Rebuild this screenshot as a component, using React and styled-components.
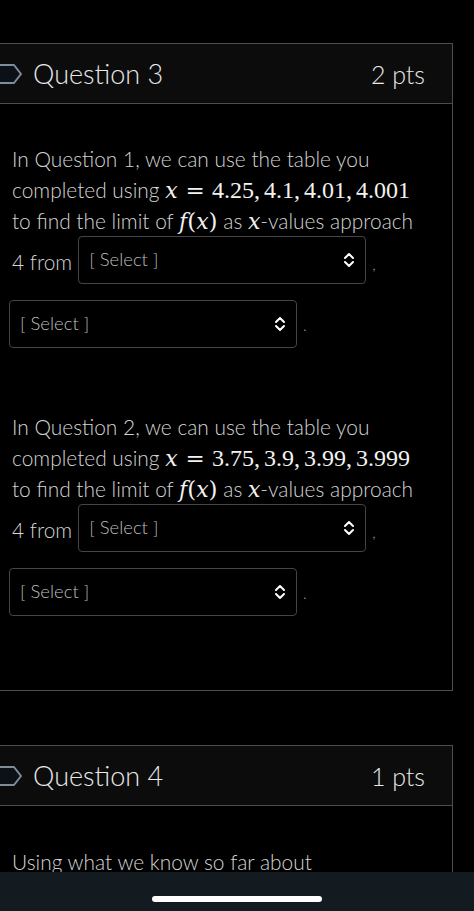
import React from "react";
import styled, { createGlobalStyle } from "styled-components";

const GlobalStyle = createGlobalStyle`
  html, body {
    margin: 0;
    padding: 0;
    background: #000;
    overflow: hidden;
  }
  body {
    font-family: Lato, "Open Sans", sans-serif;
  }
`;

const Page = styled.div`
  background: #000;
  min-height: 911px;
  padding: 43px 21px 0 0;
  display: flex;
  flex-direction: column;
  gap: 54px;
`;

const Card = styled.section`
  margin-left: -4px;
  border: 1px solid #4d4d4d;
  border-left: none;
  background: #000;
`;

const Header = styled.header`
  height: 59px;
  background: #0c0c0c;
  border-bottom: 1px solid #4d4d4d;
  display: flex;
  align-items: center;
  padding: 0 27px 0 0;
  color: #e8e8e8;
  font-size: 27px;
  font-weight: 300;
`;

const Title = styled.h2`
  flex: 1;
  margin: 0;
  font-size: inherit;
  font-weight: inherit;
  display: flex;
  align-items: center;
  gap: 11px;
`;

const Points = styled.span`
  font-size: 25px;
`;

const Body = styled.div`
  padding: ${(p) => p.$top}px 26px ${(p) => p.$bottom}px 16px;
  color: #d4d4d4;
  font-size: 20.9px;
  font-weight: 300;
  line-height: 31px;
`;

const Para = styled.p`
  margin: 0 0 ${(p) => p.$gap || 0}px;
`;

const Math = styled.span`
  font-family: ${(p) =>
    p.$italic
      ? `"DejaVu Serif", "Liberation Serif", serif`
      : `"Liberation Serif", "DejaVu Serif", serif`};
  font-size: ${(p) => (p.$italic ? "22px" : "24px")};
  font-weight: 400;
  line-height: 1;
  color: #f2f2f2;
  font-style: ${(p) => (p.$italic ? "italic" : "normal")};
  margin: ${(p) => p.$margin || "0"};
`;

const Paren = styled.span`
  font-family: "DejaVu Serif", serif;
  font-size: 23px;
  line-height: 1;
  color: #f2f2f2;
`;

const Eq = styled.span`
  font-family: "DejaVu Serif", serif;
  font-size: 23px;
  line-height: 1;
  color: #f2f2f2;
  margin: 0 7px 0 8px;
`;

const SelectBox = styled.span`
  display: inline-flex;
  align-items: center;
  justify-content: space-between;
  box-sizing: border-box;
  width: 288px;
  height: 48px;
  padding: 0 10px 0 10px;
  margin: ${(p) => (p.$block ? "16px 0 0 -3px" : "10px 0 0 6px")};
  border: 1px solid #454545;
  border-radius: 4px;
  background: #000;
  color: #bdbdbd;
  font-size: 18.5px;
  vertical-align: middle;
  position: relative;
  top: -10px;
`;

const SelectLabel = styled.span`
  margin-top: -2px;
`;

const Trail = styled.span`
  color: #9a9a9a;
  margin-left: 6px;
  font-size: 16px;
`;

const BottomBar = styled.div`
  position: fixed;
  left: 0;
  right: 0;
  bottom: 0;
  height: 39px;
  background: #131b21;
  display: flex;
  justify-content: center;
  align-items: flex-end;
  padding-bottom: 9px;
  box-sizing: border-box;
`;

const HomeIndicator = styled.div`
  width: 170px;
  height: 6px;
  border-radius: 3px;
  background: #fff;
`;

const Flag = () => (
  <svg width="26" height="22" viewBox="0 0 26 22">
    <path
      d="M-6 2 H18 L25 11 L18 20 H-6 Z"
      fill="#0b1116"
      stroke="#7d8d99"
      strokeWidth="2"
      strokeLinejoin="round"
    />
  </svg>
);

const Chevrons = () => (
  <svg width="12" height="16" viewBox="0 0 12 16">
    <path
      d="M2 6 L6 2 L10 6 M2 10 L6 14 L10 10"
      fill="none"
      stroke="#fff"
      strokeWidth="2"
      strokeLinecap="round"
      strokeLinejoin="round"
    />
  </svg>
);

const Select = ({ block }) => (
  <SelectBox $block={block}>
    <SelectLabel>[ Select ]</SelectLabel>
    <Chevrons />
  </SelectBox>
);

const Values = ({ nums }) =>
  nums.map((n, i) => (
    <Math key={n} $margin={i < nums.length - 1 ? "0 4px 0 0" : "0"}>
      {n}
      {i < nums.length - 1 ? "," : ""}
    </Math>
  ));

const LimitQuestion = ({ q, nums, gap }) => (
  <Para $gap={gap}>
    In Question {q}, we can use the table you completed using{" "}
    <Math $italic>x</Math>
    <Eq>=</Eq>
    <Values nums={nums} /> to find the limit of{" "}
    <Math $italic>f</Math>
    <Paren>(</Paren>
    <Math $italic>x</Math>
    <Paren>)</Paren> as <Math $italic>x</Math>-values approach 4 from
    <Select />
    <Trail>,</Trail>
    <br />
    <Select block />
    <Trail>.</Trail>
  </Para>
);

const App = () => (
  <>
    <GlobalStyle />
    <Page>
      <Card>
        <Header>
          <Title>
            <Flag />
            Question 3
          </Title>
          <Points>2 pts</Points>
        </Header>
        <Body $top={39} $bottom={64}>
          <LimitQuestion q={1} nums={["4.25", "4.1", "4.01", "4.001"]} gap={53} />
          <LimitQuestion q={2} nums={["3.75", "3.9", "3.99", "3.999"]} />
        </Body>
      </Card>
      <Card>
        <Header>
          <Title>
            <Flag />
            Question 4
          </Title>
          <Points>1 pts</Points>
        </Header>
        <Body $top={40} $bottom={40}>
          <Para>Using what we know so far about</Para>
        </Body>
      </Card>
    </Page>
    <BottomBar>
      <HomeIndicator />
    </BottomBar>
  </>
);

export default App;
